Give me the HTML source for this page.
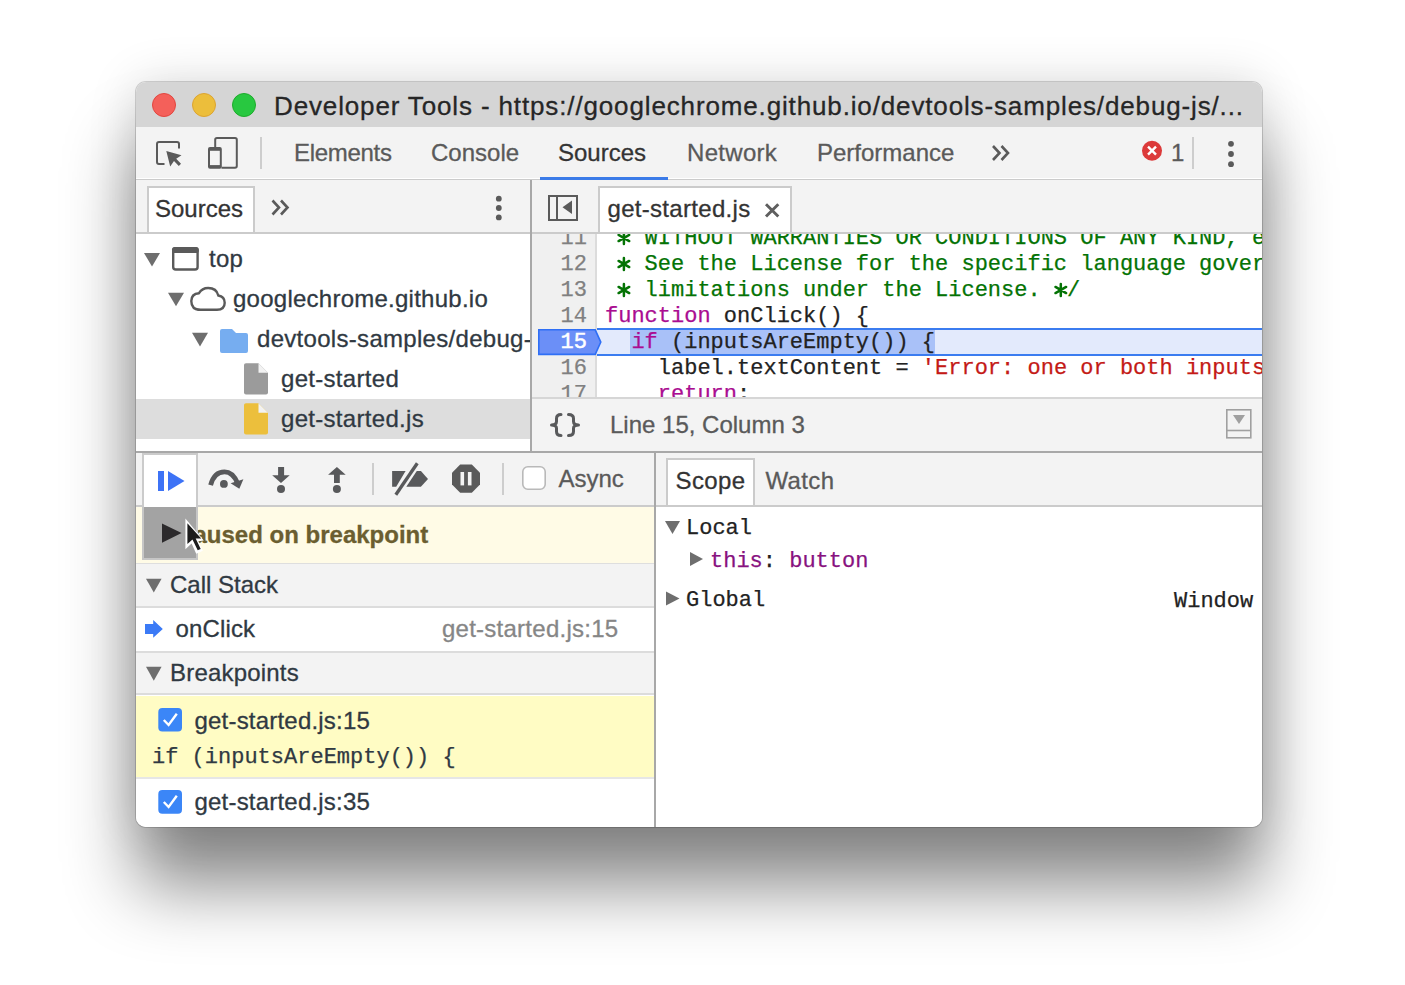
<!DOCTYPE html>
<html><head><meta charset="utf-8">
<style>
html,body{margin:0;padding:0;width:1405px;height:985px;overflow:hidden;background:#fff;}
body{position:relative;font-family:"Liberation Sans",sans-serif;}
#win{position:absolute;left:136px;top:82px;width:1126px;height:745px;border-radius:10px;overflow:hidden;background:#fff;
 box-shadow:0 60px 70px rgba(0,0,0,0.46),0 0 50px rgba(0,0,0,0.14),0 0 0 1px rgba(0,0,0,0.16);}
#L{position:absolute;left:-136px;top:-82px;width:1405px;height:985px;}
.a{position:absolute;}
.t{position:absolute;white-space:nowrap;font-size:24px;line-height:24px;-webkit-text-stroke:0.3px currentColor;}
.m{position:absolute;white-space:pre;font-family:"Liberation Mono",monospace;font-size:22px;line-height:22px;-webkit-text-stroke:0.25px currentColor;}
svg{position:absolute;overflow:visible;}
</style></head><body>
<div id="win"><div id="L">

<!-- title bar -->
<div class="a" style="left:136px;top:82px;width:1126px;height:45px;background:#d5d5d5;"></div>
<div class="a" style="left:152px;top:93px;width:22px;height:22px;border-radius:50%;background:#f4605a;border:1px solid #e2463f;"></div>
<div class="a" style="left:192px;top:93px;width:22px;height:22px;border-radius:50%;background:#ecbe3b;border:1px solid #dca431;"></div>
<div class="a" style="left:232px;top:93px;width:22px;height:22px;border-radius:50%;background:#28c840;border:1px solid #1eab2b;"></div>
<div class="t" style="left:274px;top:93px;font-size:26px;line-height:26px;letter-spacing:0.86px;color:#262626;">Developer Tools - https://googlechrome.github.io/devtools-samples/debug-js/...</div>

<!-- main toolbar -->
<div class="a" style="left:136px;top:127px;width:1126px;height:51px;background:#f3f3f3;"></div>
<div class="a" style="left:136px;top:178.7px;width:1126px;height:1.8px;background:#cbcbcb;"></div>
<svg style="left:150px;top:132px" width="40" height="40" viewBox="150 132 40 40">
 <path d="M179 148.5V144Q179 142 177 142H159Q157 142 157 144V162Q157 164 159 164H164.5" fill="none" stroke="#5a5a5a" stroke-width="2"/>
 <path d="M166.3 151L181.5 155.3L176.2 158.8L181 163.8L178.8 166L174 161L170.2 166.4Z" fill="#5a5a5a"/>
</svg>
<svg style="left:205px;top:132px" width="40" height="40" viewBox="205 132 40 40">
 <path d="M215.2 147V139.8Q215.2 138 217 138H235Q236.8 138 236.8 139.8V166Q236.8 167.8 235 167.8H221.5" fill="none" stroke="#5a5a5a" stroke-width="2"/>
 <rect x="208" y="147" width="13.8" height="21.7" rx="2" fill="#5a5a5a"/>
 <rect x="210" y="150.8" width="9.8" height="14.3" fill="#f3f3f3"/>
</svg>
<div class="a" style="left:260px;top:137px;width:2px;height:32px;background:#cdcdcd;"></div>
<div class="t" style="left:294px;top:140.7px;color:#5a5a5a;letter-spacing:-0.3px;">Elements</div>
<div class="t" style="left:431px;top:140.7px;color:#5a5a5a;">Console</div>
<div class="t" style="left:558px;top:140.7px;color:#333;">Sources</div>
<div class="t" style="left:687px;top:140.7px;color:#5a5a5a;letter-spacing:0.3px;">Network</div>
<div class="t" style="left:817px;top:140.7px;color:#5a5a5a;">Performance</div>
<div class="a" style="left:540px;top:177px;width:128px;height:4px;background:#3b7be8;"></div>
<svg style="left:988px;top:140px" width="30" height="26" viewBox="988 140 30 26">
 <path d="M993 146L999.5 153L993 160M1001.5 146L1008 153L1001.5 160" fill="none" stroke="#5a5a5a" stroke-width="2.6"/>
</svg>
<svg style="left:1138px;top:137px" width="28" height="28" viewBox="1138 137 28 28">
 <circle cx="1152" cy="150.7" r="10" fill="#dc3a3a"/>
 <path d="M1148 146.7L1156 154.7M1156 146.7L1148 154.7" stroke="#fff" stroke-width="2.4"/>
</svg>
<div class="t" style="left:1171px;top:140.5px;color:#5a5a5a;">1</div>
<div class="a" style="left:1192px;top:137px;width:2px;height:32px;background:#cdcdcd;"></div>
<svg style="left:1220px;top:136px" width="22" height="36" viewBox="1220 136 22 36">
 <circle cx="1231" cy="143.8" r="2.9" fill="#5a5a5a"/><circle cx="1231" cy="154" r="2.9" fill="#5a5a5a"/><circle cx="1231" cy="164.2" r="2.9" fill="#5a5a5a"/>
</svg>

<!-- left navigator -->
<div class="a" style="left:136px;top:180px;width:394px;height:52px;background:#f3f3f3;"></div>
<div class="a" style="left:136px;top:232px;width:394px;height:2px;background:#cbcbcb;"></div>
<div class="a" style="left:147px;top:185.7px;width:104.3px;height:44.3px;background:#fff;border:2px solid #cbcbcb;border-bottom:none;"></div>
<div class="t" style="left:155px;top:196.5px;color:#333;">Sources</div>
<svg style="left:266px;top:195px" width="30" height="26" viewBox="266 195 30 26">
 <path d="M272.5 200.5L279 207.5L272.5 214.5M281 200.5L287.5 207.5L281 214.5" fill="none" stroke="#5a5a5a" stroke-width="2.6"/>
</svg>
<svg style="left:490px;top:192px" width="18" height="32" viewBox="490 192 18 32">
 <circle cx="498.8" cy="198.7" r="2.9" fill="#5a5a5a"/><circle cx="498.8" cy="208" r="2.9" fill="#5a5a5a"/><circle cx="498.8" cy="217.4" r="2.9" fill="#5a5a5a"/>
</svg>
<div class="a" style="left:136px;top:234px;width:394px;height:218px;background:#fff;"></div>
<div class="a" style="left:136px;top:399px;width:394px;height:40px;background:#dddddd;"></div>
<svg style="left:136px;top:234px" width="394" height="218" viewBox="136 234 394 218">
 <path d="M144 253H160L152 266.4Z" fill="#6e6e6e"/>
 <path d="M168 292.8H184L176 306.3Z" fill="#6e6e6e"/>
 <path d="M192 332.8H208L200 346.6Z" fill="#6e6e6e"/>
 <rect x="173.2" y="248.2" width="24.4" height="21.3" rx="2.6" fill="none" stroke="#5a5a5a" stroke-width="2.4"/>
 <rect x="172" y="247" width="26.8" height="6" rx="2.6" fill="#5a5a5a"/>
 <path d="M197.2 309.8H200.5Q191.3 309.8 191.3 301Q191.3 293.8 199 293.2Q202 288 208.2 288Q216.5 288 218.3 295.5Q224.7 296.5 224.7 302.8Q224.7 309.8 217 309.8Z" fill="none" stroke="#5a5a5a" stroke-width="2.4"/>
 <path d="M220 331Q220 329 222 329H232L236 333H246Q248 333 248 335V351Q248 353 246 353H222Q220 353 220 351Z" fill="#76adf0"/>
 <path d="M244 365Q244 363.2 246 363.2H258.5L268 372.7V392.6Q268 394.6 266 394.6H246Q244 394.6 244 392.6Z" fill="#9b9b9b"/>
 <path d="M258.5 363.2V372.7H268Z" fill="#f2f2f2"/>
 <path d="M244 405Q244 403.2 246 403.2H258.5L268 412.7V432.5Q268 434.5 266 434.5H246Q244 434.5 244 432.5Z" fill="#ecbf3c"/>
 <path d="M258.5 403.2V412.7H268Z" fill="#f2f2f2"/>
</svg>
<div class="t" style="left:209px;top:247px;color:#303942;letter-spacing:0.3px;">top</div>
<div class="t" style="left:233px;top:287px;color:#303942;letter-spacing:0.25px;">googlechrome.github.io</div>
<div class="t" style="left:257px;top:327px;color:#303942;letter-spacing:0.3px;">devtools-samples/debug-js</div>
<div class="t" style="left:281px;top:367px;color:#303942;letter-spacing:0.3px;">get-started</div>
<div class="t" style="left:281px;top:407px;color:#303942;letter-spacing:0.3px;">get-started.js</div>
<div class="a" style="left:530px;top:180px;width:2px;height:272px;background:#a8a8a8;"></div>

<!-- editor -->
<div class="a" style="left:532px;top:180px;width:730px;height:52px;background:#f3f3f3;"></div>
<div class="a" style="left:532px;top:232px;width:730px;height:2px;background:#cbcbcb;"></div>
<svg style="left:544px;top:190px" width="40" height="36" viewBox="544 190 40 36">
 <rect x="549" y="196" width="28" height="24" fill="none" stroke="#5a5a5a" stroke-width="2"/>
 <path d="M557 196V220" stroke="#5a5a5a" stroke-width="2"/>
 <path d="M572 200.5V214L562.5 207.2Z" fill="#5a5a5a"/>
</svg>
<div class="a" style="left:598px;top:185.5px;width:190px;height:44.5px;background:#fff;border:2px solid #cbcbcb;border-bottom:none;"></div>
<div class="t" style="left:607.5px;top:196.7px;color:#333;letter-spacing:0.3px;">get-started.js</div>
<svg style="left:760px;top:199px" width="24" height="24" viewBox="760 199 24 24">
 <path d="M766 204.2L778.3 216.5M778.3 204.2L766 216.5" stroke="#5f5f5f" stroke-width="2.9"/>
</svg>

<div class="a" style="left:532px;top:234px;width:730px;height:163px;background:#fff;overflow:hidden;">
 <div class="a" style="left:0;top:0;width:63px;height:163px;background:#f0f0f0;"></div>
 <div class="a" style="left:63px;top:0;width:2px;height:163px;background:#dcdcdc;"></div>
 <div class="a" style="left:65px;top:93.5px;width:665px;height:28.5px;background:#e3eafc;border-top:2px solid #3b7cf0;border-bottom:2px solid #3b7cf0;box-sizing:border-box;"></div>
 <div class="a" style="left:98px;top:95.5px;width:305px;height:24.5px;background:#a9c1f8;"></div>
 <svg style="left:0;top:0" width="80" height="163" viewBox="532 234 80 163">
  <path d="M538.8 329.8H595.2L600.8 342.1L595.2 354.4H538.8Z" fill="#6b8ff7" stroke="#2f6ff5" stroke-width="1.6"/>
 </svg>
</div>
<div style="position:absolute;left:532px;top:234px;width:730px;height:163px;overflow:hidden;">
 <div class="m" style="left:0;top:-6.5px;width:55px;text-align:right;color:#808080;">11</div>
 <div class="m" style="left:0;top:19.5px;width:55px;text-align:right;color:#808080;">12</div>
 <div class="m" style="left:0;top:45.5px;width:55px;text-align:right;color:#808080;">13</div>
 <div class="m" style="left:0;top:71.5px;width:55px;text-align:right;color:#808080;">14</div>
 <div class="m" style="left:0;top:97.5px;width:55px;text-align:right;color:#fff;-webkit-text-stroke:0.5px #fff;">15</div>
 <div class="m" style="left:0;top:123.5px;width:55px;text-align:right;color:#808080;">16</div>
 <div class="m" style="left:0;top:149.5px;width:55px;text-align:right;color:#808080;">17</div>
 <div class="m" style="left:73px;top:-6.5px;color:#047304;">   WITHOUT WARRANTIES OR CONDITIONS OF ANY KIND, either express or implied.</div>
 <div class="m" style="left:73px;top:19.5px;color:#047304;">   See the License for the specific language governing permissions and</div>
 <div class="m" style="left:73px;top:45.5px;color:#047304;">   limitations under the License.  /</div>
 <svg style="left:0;top:0" width="730" height="163" viewBox="532 234 730 163"><path d="M623.9 232.1V243.9M618.6 234.95L629.1999999999999 241.05M618.6 241.05L629.1999999999999 234.95M623.9 258.1V269.9M618.6 260.95L629.1999999999999 267.05M618.6 267.05L629.1999999999999 260.95M623.9 284.1V295.9M618.6 286.95L629.1999999999999 293.05M618.6 293.05L629.1999999999999 286.95M1060.8 284.1V295.9M1055.5 286.95L1066.1 293.05M1055.5 293.05L1066.1 286.95" stroke="#047304" stroke-width="2.5" stroke-linecap="round" fill="none"/></svg>
<div class="m" style="left:73px;top:71.5px;color:#222;"><span style="color:#aa0d91">function</span> onClick() {</div>
 <div class="m" style="left:73px;top:97.5px;color:#222;">  <span style="color:#aa0d91">if</span> (inputsAreEmpty()) {</div>
 <div class="m" style="left:73px;top:123.5px;color:#222;">    label.textContent = <span style="color:#c41a16">'Error: one or both inputs are empty.'</span>;</div>
 <div class="m" style="left:73px;top:149.5px;color:#222;">    <span style="color:#aa0d91">return</span>;</div>
</div>

<!-- status bar -->
<div class="a" style="left:532px;top:397px;width:730px;height:2px;background:#d6d6d6;"></div>
<div class="a" style="left:532px;top:399px;width:730px;height:52px;background:#f3f3f3;"></div>
<svg style="left:545px;top:408px" width="40" height="34" viewBox="545 408 40 34">
 <path d="M561 414.5Q556.5 414.5 556.5 418.5V421.5Q556.5 424.9 551.5 424.9Q556.5 424.9 556.5 428.3V431.5Q556.5 435.5 561 435.5M568.5 414.5Q573.5 414.5 573.5 418.5V421.5Q573.5 424.9 578.5 424.9Q573.5 424.9 573.5 428.3V431.5Q573.5 435.5 568.5 435.5" fill="none" stroke="#58595b" stroke-width="3" stroke-linecap="round" stroke-linejoin="round"/>
</svg>
<div class="t" style="left:610px;top:412.7px;color:#5a5a5a;">Line 15, Column 3</div>
<svg style="left:1222px;top:405px" width="34" height="38" viewBox="1222 405 34 38">
 <rect x="1226.8" y="409.8" width="24" height="28" fill="none" stroke="#a0a0a0" stroke-width="1.6"/>
 <path d="M1227 430.5H1251" stroke="#a0a0a0" stroke-width="1.6"/>
 <path d="M1233 415H1245L1239 424Z" fill="#a0a0a0"/>
</svg>

<!-- horizontal divider -->
<div class="a" style="left:136px;top:451px;width:1126px;height:2px;background:#a8a8a8;"></div>

<!-- debugger sidebar left -->
<div class="a" style="left:136px;top:453px;width:518px;height:52px;background:#f3f3f3;"></div>
<div class="a" style="left:136px;top:505px;width:518px;height:2px;background:#cbcbcb;"></div>
<div class="a" style="left:142px;top:453px;width:52px;height:54px;background:#fff;border:2px solid #cbcbcb;border-bottom:none;"></div>
<svg style="left:136px;top:453px" width="518" height="52" viewBox="136 453 518 52">
 <rect x="158" y="471" width="6" height="20" fill="#3d73f6"/>
 <path d="M168 471L184.5 481L168 491Z" fill="#3d73f6"/>
 <path d="M210.6 485.2C213 476 218 471.9 224.5 471.9C230.5 471.9 234.5 476 237.5 483" fill="none" stroke="#58595b" stroke-width="4.8"/>
 <path d="M230.6 483.3L243.4 479.2L239.3 488.8Z" fill="#58595b"/>
 <circle cx="223.9" cy="483.9" r="3.9" fill="#58595b"/>
 <path d="M278.1 467H284.1V475.2H289.7L281 482.9L272.2 475.2H278.1Z" fill="#58595b"/>
 <circle cx="281" cy="489" r="4" fill="#58595b"/>
 <path d="M334 482.9V474.7H328.1L336.9 467L345.7 474.7H339.8V482.9Z" fill="#58595b"/>
 <circle cx="336.9" cy="489" r="4" fill="#58595b"/>
 <rect x="372" y="463" width="2" height="32" fill="#cdcdcd"/>
 <path d="M392.1 471.1H405.6L396.2 486.8H392.1Z" fill="#58595b"/>
 <path d="M416.8 471.1H420.9L428 478.9L420.9 486.8H406.3Z" fill="#58595b"/>
 <path d="M417.3 463.2L395.8 494.8" stroke="#58595b" stroke-width="3.3"/>
 <path d="M460.2 464.6H471.8L480 472.8V484.6L471.8 492.8H460.2L452 484.6V472.8Z" fill="#5a5a5a"/>
 <rect x="460.5" y="472" width="3.6" height="13.4" fill="#f3f3f3"/>
 <rect x="467.9" y="472" width="3.6" height="13.4" fill="#f3f3f3"/>
 <rect x="502" y="463" width="2" height="32" fill="#cdcdcd"/>
 <rect x="522.8" y="466.8" width="22.4" height="22.4" rx="5" fill="#fff" stroke="#b9b9b9" stroke-width="1.6"/>
</svg>
<div class="t" style="left:558.5px;top:467px;color:#5a5a5a;">Async</div>

<div class="a" style="left:136px;top:507px;width:518px;height:56px;background:#fffbe6;"></div>
<div class="a" style="left:136px;top:563px;width:518px;height:1.6px;background:#dedede;"></div>
<div class="t" style="left:177.5px;top:522.5px;font-weight:bold;color:#6b5e30;">Paused on breakpoint</div>
<div class="a" style="left:142px;top:507px;width:52px;height:51px;background:#a3a3a3;border:2px solid #c6c6c6;border-top:none;"></div>
<svg style="left:136px;top:500px" width="100" height="70" viewBox="136 500 100 70">
 <path d="M162 523.5L181.6 533.1L162 542.7Z" fill="#2c2a2c"/>
 <path d="M185.4 518.6V549.2L191.6 543.6L196.2 553.8L202.9 550.8L198.4 541.2L203.8 540.6Z" fill="#fff"/><path d="M187.4 523.2V544L192.5 539.6L197.7 550.3L200.7 549L195.7 538.6H201.2Z" fill="#1c1c1c"/>
</svg>

<div class="a" style="left:136px;top:564px;width:518px;height:42px;background:#f3f3f3;"></div>
<div class="a" style="left:136px;top:606px;width:518px;height:2px;background:#dcdcdc;"></div>

<div class="t" style="left:170px;top:572.5px;color:#303942;">Call Stack</div>
<div class="a" style="left:136px;top:608px;width:518px;height:44px;background:#fff;"></div>
<div class="a" style="left:136px;top:650.7px;width:518px;height:2px;background:#dcdcdc;"></div>
<div class="t" style="left:175.5px;top:616.5px;color:#303942;letter-spacing:0.15px;">onClick</div>
<div class="t" style="left:442px;top:616.5px;color:#868686;letter-spacing:0.25px;">get-started.js:15</div>
<div class="a" style="left:136px;top:652.7px;width:518px;height:40.5px;background:#f3f3f3;"></div>
<div class="a" style="left:136px;top:693.2px;width:518px;height:2.3px;background:#dcdcdc;"></div>
<div class="t" style="left:170px;top:661px;color:#303942;letter-spacing:0.2px;">Breakpoints</div>
<svg style="left:136px;top:570px" width="40" height="120" viewBox="136 570 40 120">
 <path d="M146 578.8H161.6L153.8 592.5Z" fill="#6e6e6e"/>
 <path d="M146 666.8H161.6L153.8 680.7Z" fill="#6e6e6e"/>
 <path d="M145 623.9H153.2V620L162.8 628.9L153.2 637.8V633.9H145Z" fill="#3b7af6"/>
</svg>
<div class="a" style="left:136px;top:695.5px;width:518px;height:81.5px;background:#fffcc4;"></div>
<div class="a" style="left:136px;top:777px;width:518px;height:2px;background:#e6e6e6;"></div>
<div class="a" style="left:136px;top:779px;width:518px;height:48px;background:#fff;"></div>
<svg style="left:150px;top:700px" width="40" height="120" viewBox="150 700 40 120">
 <rect x="158.3" y="708" width="23.7" height="23.6" rx="4" fill="#3b86f7"/>
 <path d="M163.8 720L168.6 725L176.8 713.8" fill="none" stroke="#fff" stroke-width="2.4"/>
 <rect x="158.3" y="790" width="23.7" height="23.8" rx="4" fill="#3b86f7"/>
 <path d="M163.8 802L168.6 807L176.8 795.8" fill="none" stroke="#fff" stroke-width="2.4"/>
</svg>
<div class="t" style="left:194.5px;top:708.5px;color:#303942;letter-spacing:0.2px;">get-started.js:15</div>
<div class="m" style="left:152px;top:746.5px;color:#303942;">if (inputsAreEmpty()) {</div>
<div class="t" style="left:194.5px;top:789.5px;color:#303942;letter-spacing:0.2px;">get-started.js:35</div>
<div class="a" style="left:654px;top:453px;width:2px;height:374px;background:#a8a8a8;"></div>

<!-- scope pane -->
<div class="a" style="left:656px;top:453px;width:606px;height:52px;background:#f3f3f3;"></div>
<div class="a" style="left:656px;top:505px;width:606px;height:2px;background:#cbcbcb;"></div>
<div class="a" style="left:666.4px;top:457.6px;width:85px;height:45.4px;background:#fff;border:2px solid #cbcbcb;border-bottom:none;"></div>
<div class="t" style="left:675.5px;top:468.5px;color:#333;letter-spacing:0.4px;">Scope</div>
<div class="t" style="left:765.5px;top:468.5px;color:#5a5a5a;letter-spacing:0.35px;">Watch</div>
<div class="a" style="left:656px;top:507px;width:606px;height:320px;background:#fff;"></div>
<svg style="left:656px;top:510px" width="60" height="110" viewBox="656 510 60 110">
 <path d="M665 521H680L672.5 534Z" fill="#6e6e6e"/>
 <path d="M690 552V566L703 559Z" fill="#6e6e6e"/>
 <path d="M666 591.5V605.5L679.5 598.5Z" fill="#6e6e6e"/>
</svg>
<div class="m" style="left:686px;top:518.3px;color:#222;">Local</div>
<div class="m" style="left:710px;top:550.7px;color:#881280;">this<span style="color:#222">:</span> button</div>
<div class="m" style="left:686px;top:590.2px;color:#222;">Global</div>
<div class="m" style="left:1174px;top:590.9px;color:#222;">Window</div>

</div></div>
</body></html>
